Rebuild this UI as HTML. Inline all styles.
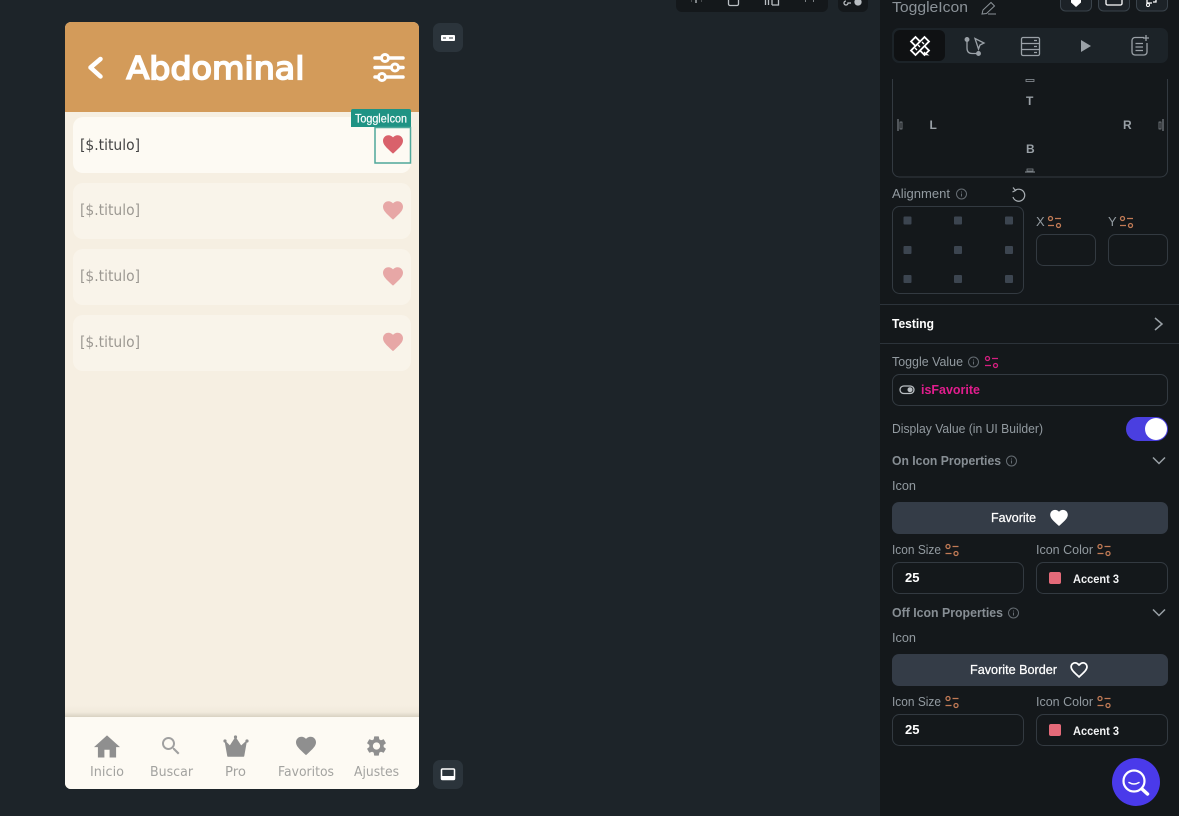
<!DOCTYPE html>
<html><head><meta charset="utf-8"><title>ToggleIcon</title>
<style>
html,body{margin:0;padding:0;width:1179px;height:816px;overflow:hidden;background:#1d2429}
svg{display:block;position:absolute;left:0;top:0}
text{font-family:"Liberation Sans",sans-serif}
text.m{font-family:"DejaVu Sans","Liberation Sans",sans-serif}
.lab{fill:#929aa0;font-size:13px}
.w{fill:#fff;font-size:13px;font-weight:bold}
</style></head><body>
<svg width="1179" height="816" viewBox="0 0 1179 816" xmlns="http://www.w3.org/2000/svg">
<defs>
<linearGradient id="sh" x1="0" y1="0" x2="0" y2="1"><stop offset="0" stop-color="#f6efe2"/><stop offset=".6" stop-color="#f1eadc"/><stop offset="1" stop-color="#d9d2c2"/></linearGradient>
<path id="heart" transform="translate(-12 -12.200)" d="M12 21.350l-1.450-1.320C5.400 15.360 2 12.280 2 8.500 2 5.420 4.420 3 7.500 3c1.740 0 3.410.810 4.500 2.090C13.090 3.810 14.760 3 16.500 3 19.580 3 22 5.420 22 8.500c0 3.780-3.400 6.860-8.550 11.540L12 21.350z"/>
<g id="vars" fill="none" stroke="#c27b56" stroke-width="1.300"><circle cx="2.500" cy="2.500" r="2"/><path d="M7 2.500h6M0 9.500h6"/><circle cx="10.500" cy="9.500" r="2"/></g>
<g id="info" fill="none" stroke="#666d73" stroke-width="1"><circle cx="5.500" cy="5.500" r="5"/><path d="M5.500 5v3M5.500 3v1"/></g>
</defs>
<rect width="1179" height="816" fill="#1d2429"/>

<!-- phone -->
<rect x="65" y="22" width="354" height="767" rx="6" fill="#f6efe2"/>
<path d="M65 112V28a6 6 0 0 1 6-6H413a6 6 0 0 1 6 6V112Z" fill="#d39b5a"/>
<path d="M100.500 59L90.500 67.500L100.500 76.500" fill="none" stroke="#fff" stroke-width="4.500" stroke-linecap="round" stroke-linejoin="round"/>
<text class="m" x="126.500" y="79" font-size="31" fill="#fff" stroke="#fff" stroke-width="1.700" textLength="178" lengthAdjust="spacingAndGlyphs">Abdominal</text>
<g fill="none" stroke="#fff" stroke-width="3.500" stroke-linecap="round">
<path d="M375 58H403M375 67.500H403M375 77H403"/>
<circle cx="385" cy="58" r="3.500" fill="#d39b5a" stroke-width="3"/><circle cx="395" cy="67.500" r="3.500" fill="#d39b5a" stroke-width="3"/><circle cx="382" cy="77" r="3.500" fill="#d39b5a" stroke-width="3"/>
</g>

<rect x="73" y="117" width="338" height="56" rx="10" fill="#fdfaf3"/>
<text class="m" x="80" y="150" font-size="15" fill="#444" textLength="60" lengthAdjust="spacingAndGlyphs">[$.titulo]</text>
<use href="#heart" x="393" y="144.500" fill="#d9616b"/>

<g opacity=".5">
<rect x="73" y="183" width="338" height="56" rx="10" fill="#fdfaf3"/>
<text class="m" x="80" y="215" font-size="15" fill="#444" textLength="60" lengthAdjust="spacingAndGlyphs">[$.titulo]</text>
<use href="#heart" x="393" y="210.500" fill="#d9616b"/>
<rect x="73" y="249" width="338" height="56" rx="10" fill="#fdfaf3"/>
<text class="m" x="80" y="281" font-size="15" fill="#444" textLength="60" lengthAdjust="spacingAndGlyphs">[$.titulo]</text>
<use href="#heart" x="393" y="276.500" fill="#d9616b"/>
<rect x="73" y="315" width="338" height="56" rx="10" fill="#fdfaf3"/>
<text class="m" x="80" y="347" font-size="15" fill="#444" textLength="60" lengthAdjust="spacingAndGlyphs">[$.titulo]</text>
<use href="#heart" x="393" y="342" fill="#d9616b"/>
</g>

<path d="M351 127V111a2 2 0 0 1 2-2H409a2 2 0 0 1 2 2V127Z" fill="#1f9384"/>
<text x="355" y="122.500" font-size="11.500" fill="#fff" stroke="#fff" stroke-width=".2" textLength="52" lengthAdjust="spacingAndGlyphs">ToggleIcon</text>
<rect x="375" y="127.500" width="35.500" height="35.500" fill="none" stroke="#4fa89a" stroke-width="1.500"/>

<!-- nav -->
<rect x="65" y="705" width="354" height="12" fill="url(#sh)"/>
<path d="M65 717H419V783a6 6 0 0 1-6 6H71a6 6 0 0 1-6-6Z" fill="#fdfaf3"/>
<path transform="translate(94 731.500) scale(1.300)" d="M8 20v-6h4v6h5v-8h3L10 3 0 12h3v8z" fill="#8f8f8f"/>
<path transform="translate(159 734)" d="M15.500 14h-.790l-.280-.270C15.410 12.590 16 11.110 16 9.500 16 5.910 13.090 3 9.500 3S3 5.910 3 9.500 5.910 16 9.500 16c1.610 0 3.090-.590 4.230-1.570l.270.280v.790l5 4.990L20.490 19l-4.990-5zm-6 0C7.010 14 5 11.990 5 9.500S7.010 5 9.500 5 14 7.010 14 9.500 11.990 14 9.500 14z" fill="#a0a0a0"/>
<path d="M225.500 742L230 746.500L235.500 738L241 746.500L246 742L243.500 756H228Z" fill="#8f8f8f" stroke="#8f8f8f" stroke-width="1.500" stroke-linejoin="round"/>
<circle cx="225" cy="741" r="1.600" fill="#8f8f8f"/><circle cx="235.500" cy="737" r="1.600" fill="#8f8f8f"/><circle cx="247" cy="741" r="1.600" fill="#8f8f8f"/>
<use href="#heart" x="306" y="746" fill="#8f8f8f"/>
<path transform="translate(364.500 734)" d="M19.140 12.940c.040-.300.060-.610.060-.940 0-.320-.020-.640-.070-.940l2.030-1.580c.180-.140.230-.410.120-.610l-1.920-3.320c-.120-.220-.370-.290-.590-.220l-2.390.960c-.500-.380-1.030-.700-1.620-.940l-.360-2.540c-.040-.240-.240-.410-.480-.410h-3.840c-.240 0-.430.170-.470.410l-.360 2.540c-.590.240-1.130.570-1.620.940l-2.390-.960c-.220-.080-.470 0-.590.220L2.740 8.870c-.120.210-.080.470.120.610l2.030 1.580c-.050.300-.090.630-.090.940s.020.640.070.940l-2.030 1.580c-.180.140-.230.410-.120.610l1.920 3.320c.120.220.370.290.590.220l2.390-.960c.500.380 1.030.700 1.620.940l.360 2.540c.050.240.240.410.480.410h3.840c.240 0 .440-.170.470-.410l.360-2.540c.590-.240 1.130-.560 1.620-.940l2.390.960c.220.080.470 0 .590-.220l1.920-3.320c.120-.220.070-.470-.120-.610l-2.010-1.580zM12 15.600c-1.980 0-3.600-1.620-3.600-3.600s1.620-3.600 3.600-3.600 3.600 1.620 3.600 3.600-1.620 3.600-3.600 3.600z" fill="#8f8f8f"/>
<text class="m" x="90" y="776" font-size="13" fill="#a3a3a0" textLength="34" lengthAdjust="spacingAndGlyphs">Inicio</text>
<text class="m" x="150" y="776" font-size="13" fill="#a3a3a0" textLength="43" lengthAdjust="spacingAndGlyphs">Buscar</text>
<text class="m" x="225" y="776" font-size="13" fill="#a3a3a0" textLength="21" lengthAdjust="spacingAndGlyphs">Pro</text>
<text class="m" x="278" y="776" font-size="13" fill="#a3a3a0" textLength="56" lengthAdjust="spacingAndGlyphs">Favoritos</text>
<text class="m" x="354" y="776" font-size="13" fill="#a3a3a0" textLength="45" lengthAdjust="spacingAndGlyphs">Ajustes</text>

<!-- side buttons -->
<rect x="433" y="23" width="30" height="29" rx="7" fill="#2b343b"/>
<rect x="441" y="35" width="14" height="6" rx="1" fill="#fff"/><path d="M443 38h3M449 38h4" stroke="#2b343b" stroke-width="1"/>
<rect x="433" y="760" width="30" height="29" rx="7" fill="#2b343b"/>
<rect x="441.500" y="769" width="13" height="10.500" rx="1" fill="none" stroke="#fff" stroke-width="1.500"/><rect x="441.500" y="776" width="13" height="3.500" fill="#fff"/>

<!-- top toolbars -->
<rect x="676" y="-10" width="152" height="22" rx="6" fill="#14181b"/>
<rect x="838" y="-10" width="30" height="22" rx="6" fill="#14181b"/>
<g fill="none" stroke="#b9bec2" stroke-width="1.300">
<path d="M696 0v3M691 1h.5M701 1h.5"/>
<path d="M728.500 0v4a1.500 1.500 0 0 0 1.500 1.500h7a1.500 1.500 0 0 0 1.500-1.500V0"/>
<path d="M765.500 0V5M768.500 0V5M772 5V0M772 5H778.500V0"/>
<path d="M805 1h1M813 1h1"/>
<path d="M846 1a2 2 0 1 0 2 2h3"/><circle cx="858" cy="2" r="3" fill="#b9bec2"/>
</g>

<!-- right panel -->
<rect x="880" y="0" width="299" height="816" fill="#14181b"/>
<text x="892" y="12" font-size="15" fill="#8b9298" textLength="76" lengthAdjust="spacingAndGlyphs">ToggleIcon</text>
<path d="M982 14L983 10L991 2.500L994.500 6L986.500 13.500ZM988 14H996" fill="none" stroke="#8b9298" stroke-width="1"/>
<g fill="#1c2227" stroke="#3a434b">
<rect x="1060.500" y="-8" width="31" height="19" rx="5"/>
<rect x="1098.500" y="-8" width="31" height="19" rx="5"/>
<rect x="1136.500" y="-8" width="31" height="19" rx="5"/>
</g>
<path d="M1076 7L1071 2.500V0H1081V2.500Z" fill="#fff"/>
<rect x="1106" y="-3" width="16" height="8" rx="1.500" fill="none" stroke="#fff" stroke-width="1.300"/>
<path d="M1147 0v3h5M1156 0v2h-3" fill="none" stroke="#fff" stroke-width="1.300"/><circle cx="1148" cy="5" r="1.500" fill="none" stroke="#fff"/>

<rect x="892" y="28" width="276" height="35" rx="7" fill="#1c2328"/>
<rect x="894" y="30" width="51" height="31" rx="6" fill="#0f1113"/>
<g transform="translate(920 46)" fill="none" stroke="#fff" stroke-width="1.800">
<path d="M-9-4.500L-4.500-9L9 4.500L4.500 9Z"/><path d="M9-4.500L4.500-9L-9 4.500L-4.500 9Z" fill="#0f1113"/><path d="M-5 2L-3 4M-2 -1L0 1M2-4L4-2" stroke-width="1.300"/><path d="M4 5.500L9.500 9.500L3.500 9Z" fill="#fff" stroke="none"/>
</g>
<g fill="none" stroke="#9aa1a7" stroke-width="1.300">
<circle cx="967" cy="39.500" r="1.800" fill="#9aa1a7"/><circle cx="978.500" cy="53.500" r="1.800" fill="#9aa1a7"/>
<path d="M967 41V48Q967 53.500 972 53.500H977"/><path d="M975 38.500L984 43L980 45L978.500 49Z"/>
<rect x="1021.500" y="37.500" width="18" height="18" rx="1.500"/><path d="M1021.500 43.500H1039.500M1021.500 49.500H1039.500M1034 40.500h3M1034 46.500h3M1034 52.500h3"/>
<path d="M1144 37.500H1135a3 3 0 0 0-3 3V52a3 3 0 0 0 3 3H1144a3 3 0 0 0 3-3V43M1135.500 43.500H1143M1135.500 47H1143M1135.500 50.500H1143M1146 35V41M1143 38H1149"/>
</g>
<path d="M1081 40V52L1091 46Z" fill="#9aa1a7"/>

<path d="M892.500 79V170a7 7 0 0 0 7 7H1160.500a7 7 0 0 0 7-7V79" fill="none" stroke="#333a41"/>
<rect x="1026" y="79.500" width="8" height="2" fill="none" stroke="#8b9298" stroke-width=".8"/>
<text x="1026" y="105" fill="#99a0a6" font-size="12" font-weight="bold">T</text>
<text x="929.500" y="129" fill="#99a0a6" font-size="12" font-weight="bold">L</text>
<text x="1123" y="129" fill="#99a0a6" font-size="12" font-weight="bold">R</text>
<text x="1026" y="153" fill="#99a0a6" font-size="12" font-weight="bold">B</text>
<path d="M898 119V131M1163 119V131M1025 172H1035" stroke="#8b9298" stroke-width="1"/>
<rect x="900" y="122" width="2" height="7" fill="none" stroke="#8b9298" stroke-width=".7"/>
<rect x="1159" y="122" width="2" height="7" fill="none" stroke="#8b9298" stroke-width=".7"/>
<rect x="1027" y="169" width="6" height="2" fill="none" stroke="#8b9298" stroke-width=".7"/>

<text class="lab" x="892" y="198" textLength="58" lengthAdjust="spacingAndGlyphs">Alignment</text>
<use href="#info" x="956" y="188.500"/>
<path d="M1015 190.500A6 6 0 1 1 1013 197M1013 187.500L1015.500 190.500L1012.500 192" fill="none" stroke="#aab0b5" stroke-width="1.200"/>

<rect x="892.500" y="206.500" width="131" height="87" rx="7" fill="none" stroke="#333a41"/>
<g fill="#3c4550">
<rect x="903.500" y="216.500" width="8" height="8" rx="1"/><rect x="954" y="216.500" width="8" height="8" rx="1"/><rect x="1005" y="216.500" width="8" height="8" rx="1"/>
<rect x="903.500" y="246" width="8" height="8" rx="1"/><rect x="954" y="246" width="8" height="8" rx="1"/><rect x="1005" y="246" width="8" height="8" rx="1"/>
<rect x="903.500" y="275" width="8" height="8" rx="1"/><rect x="954" y="275" width="8" height="8" rx="1"/><rect x="1005" y="275" width="8" height="8" rx="1"/>
</g>
<text class="lab" x="1036" y="226">X</text><use href="#vars" x="1048" y="216"/>
<text class="lab" x="1108" y="226">Y</text><use href="#vars" x="1120" y="216"/>
<rect x="1036.500" y="234.500" width="59" height="31" rx="7" fill="none" stroke="#333a41"/>
<rect x="1108.500" y="234.500" width="59" height="31" rx="7" fill="none" stroke="#333a41"/>

<path d="M880 304.500H1179M880 343.500H1179" stroke="#2c333a"/>
<text x="892" y="328" font-size="13" font-weight="bold" fill="#fff" textLength="42" lengthAdjust="spacingAndGlyphs">Testing</text>
<path d="M1155 318L1162 324L1155 330" fill="none" stroke="#99a0a6" stroke-width="1.500"/>

<text class="lab" x="892" y="366" textLength="71" lengthAdjust="spacingAndGlyphs">Toggle Value</text>
<use href="#info" x="968" y="356.500"/>
<g fill="none" stroke="#d61f80" stroke-width="1.300"><circle cx="987.500" cy="358.500" r="2"/><path d="M992 358.500h6M985 365.500h6"/><circle cx="995.500" cy="365.500" r="2"/></g>
<rect x="892.500" y="374.500" width="275" height="31" rx="7" fill="none" stroke="#333a41"/>
<rect x="900" y="386" width="14" height="7.500" rx="3.700" fill="none" stroke="#b9bec2" stroke-width="1.300"/><circle cx="910" cy="389.700" r="2.500" fill="#b9bec2"/>
<text x="921" y="394" font-size="13" font-weight="bold" fill="#e11d8d" textLength="59" lengthAdjust="spacingAndGlyphs">isFavorite</text>

<text class="lab" x="892" y="433" textLength="151" lengthAdjust="spacingAndGlyphs">Display Value (in UI Builder)</text>
<rect x="1126" y="417" width="42" height="24" rx="12" fill="#4a3fe0"/><circle cx="1156" cy="429" r="11" fill="#fff"/>

<text x="892" y="465" font-size="13" font-weight="bold" fill="#878e94" textLength="109" lengthAdjust="spacingAndGlyphs">On Icon Properties</text>
<use href="#info" x="1006" y="455.500"/>
<path d="M1153 457.500L1159 463.500L1165 457.500" fill="none" stroke="#99a0a6" stroke-width="1.500"/>
<text class="lab" x="892" y="490" textLength="24" lengthAdjust="spacingAndGlyphs">Icon</text>
<rect x="892" y="502" width="276" height="32" rx="7" fill="#343c47"/>
<text x="991" y="522" font-size="13" fill="#fff" stroke="#fff" stroke-width=".25" textLength="45" lengthAdjust="spacingAndGlyphs">Favorite</text>
<g transform="translate(1059 518) scale(.88)"><use href="#heart" fill="#fff"/></g>

<text class="lab" x="892" y="554" textLength="49" lengthAdjust="spacingAndGlyphs">Icon Size</text><use href="#vars" x="945.500" y="544"/>
<text class="lab" x="1036" y="554" textLength="57" lengthAdjust="spacingAndGlyphs">Icon Color</text><use href="#vars" x="1097.500" y="544"/>
<rect x="892.500" y="562.500" width="131" height="31" rx="7" fill="none" stroke="#333a41"/>
<text class="w" x="905" y="582">25</text>
<rect x="1036.500" y="562.500" width="131" height="31" rx="7" fill="none" stroke="#333a41"/>
<rect x="1049" y="572" width="12" height="12" rx="2" fill="#e46a79"/>
<text x="1073" y="583" font-size="11.500" font-weight="bold" fill="#f2f3f4" textLength="46" lengthAdjust="spacingAndGlyphs">Accent 3</text>

<text x="892" y="617" font-size="13" font-weight="bold" fill="#878e94" textLength="111" lengthAdjust="spacingAndGlyphs">Off Icon Properties</text>
<use href="#info" x="1008" y="607.500"/>
<path d="M1153 609.500L1159 615.500L1165 609.500" fill="none" stroke="#99a0a6" stroke-width="1.500"/>
<text class="lab" x="892" y="642" textLength="24" lengthAdjust="spacingAndGlyphs">Icon</text>
<rect x="892" y="654" width="276" height="32" rx="7" fill="#343c47"/>
<text x="970" y="674" font-size="13" fill="#fff" stroke="#fff" stroke-width=".25" textLength="87" lengthAdjust="spacingAndGlyphs">Favorite Border</text>
<path transform="translate(1068.500 659.300) scale(.88)" d="M16.500 3c-1.740 0-3.410.810-4.500 2.090C10.910 3.810 9.240 3 7.500 3 4.420 3 2 5.420 2 8.500c0 3.780 3.400 6.860 8.550 11.540L12 21.350l1.450-1.320C18.600 15.360 22 12.280 22 8.500 22 5.420 19.580 3 16.500 3zm-4.400 15.550l-.100.100-.100-.100C7.140 14.240 4 11.390 4 8.500 4 6.500 5.500 5 7.500 5c1.540 0 3.040.990 3.570 2.360h1.870C13.460 5.990 14.960 5 16.500 5c2 0 3.500 1.500 3.500 3.500 0 2.890-3.140 5.740-7.900 10.050z" fill="#fff"/>

<text class="lab" x="892" y="706" textLength="49" lengthAdjust="spacingAndGlyphs">Icon Size</text><use href="#vars" x="945.500" y="696"/>
<text class="lab" x="1036" y="706" textLength="57" lengthAdjust="spacingAndGlyphs">Icon Color</text><use href="#vars" x="1097.500" y="696"/>
<rect x="892.500" y="714.500" width="131" height="31" rx="7" fill="none" stroke="#333a41"/>
<text class="w" x="905" y="734">25</text>
<rect x="1036.500" y="714.500" width="131" height="31" rx="7" fill="none" stroke="#333a41"/>
<rect x="1049" y="724" width="12" height="12" rx="2" fill="#e46a79"/>
<text x="1073" y="735" font-size="11.500" font-weight="bold" fill="#f2f3f4" textLength="46" lengthAdjust="spacingAndGlyphs">Accent 3</text>

<circle cx="1136" cy="782" r="24" fill="#4a3aea"/>
<circle cx="1134" cy="781" r="10.500" fill="none" stroke="#fff" stroke-width="2.200"/>
<path d="M1142 789L1147.500 794" stroke="#fff" stroke-width="3.500" stroke-linecap="round"/>
<path d="M1129 782.500Q1134 785.500 1139 782.500" fill="none" stroke="#fff" stroke-width="1.500" stroke-linecap="round"/>
</svg>
</body></html>
